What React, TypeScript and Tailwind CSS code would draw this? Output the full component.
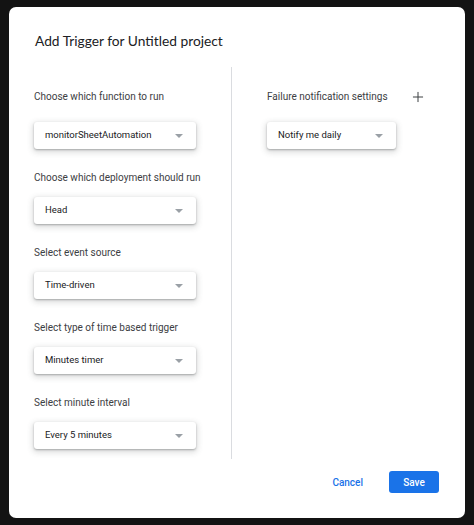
import { Plus } from "lucide-react";

const sections = [
  { label: "Choose which deployment should run", value: "Head" },
  { label: "Select event source", value: "Time-driven" },
  { label: "Select type of time based trigger", value: "Minutes timer" },
  { label: "Select minute interval", value: "Every 5 minutes" },
];

function Select({ value, width }: { value: string; width: string }) {
  return (
    <div
      className={`${width} h-[27px] flex items-center justify-between pl-[11px] pr-[13px] rounded-[3px] bg-white shadow-[0_1px_2px_rgba(60,64,67,0.35),0_2px_6px_1px_rgba(60,64,67,0.2)]`}
    >
      <span className="text-[9.5px] text-[#202124]">{value}</span>
      <svg width="8" height="4" viewBox="0 0 8 4">
        <path d="M0 0h8L4 4z" fill="#9aa0a6" />
      </svg>
    </div>
  );
}

export default function App() {
  return (
    <div className="h-[525px] bg-[#131313] px-[9px] py-[7px] font-['Roboto',sans-serif]">
      <div className="h-full rounded-[7px] bg-white flex flex-col">
        <h1 className="pl-[26px] pt-[22px] text-[13.75px] leading-[24px] text-[#202124] font-['Lato',sans-serif]">
          Add Trigger for Untitled project
        </h1>

        <div className="mt-[14px] h-[392px] flex">
          {/* Left column */}
          <div className="ml-[25px] w-[198px] border-r border-[#dadce0] pt-[22px]">
            <div className="text-[10px] leading-[16px] text-[#3c4043]">Choose which function to run</div>
            <div className="mt-[17px]">
              <Select value="monitorSheetAutomation" width="w-[162px]" />
            </div>
            {sections.map((s) => (
              <div key={s.label} className="mt-[21px]">
                <div className="text-[10px] leading-[16px] text-[#3c4043]">{s.label}</div>
                <div className="mt-[11px]">
                  <Select value={s.value} width="w-[162px]" />
                </div>
              </div>
            ))}
          </div>

          {/* Right column */}
          <div className="pl-[35px] pt-[22px]">
            <div className="w-[159px] flex items-center justify-between">
              <span className="text-[10px] leading-[16px] text-[#3c4043]">Failure notification settings</span>
              <Plus size={16} strokeWidth={1.5} className="text-[#3c4043]" />
            </div>
            <div className="mt-[17px]">
              <Select value="Notify me daily" width="w-[129px]" />
            </div>
          </div>
        </div>

        <div className="mt-[12px] mr-[26px] flex justify-end items-center gap-[26px]">
          <button className="text-[10px] font-medium text-[#1a73e8]">Cancel</button>
          <button className="w-[50px] h-[22px] rounded-[3px] bg-[#1a73e8] text-white text-[10px] font-medium">
            Save
          </button>
        </div>
      </div>
    </div>
  );
}
